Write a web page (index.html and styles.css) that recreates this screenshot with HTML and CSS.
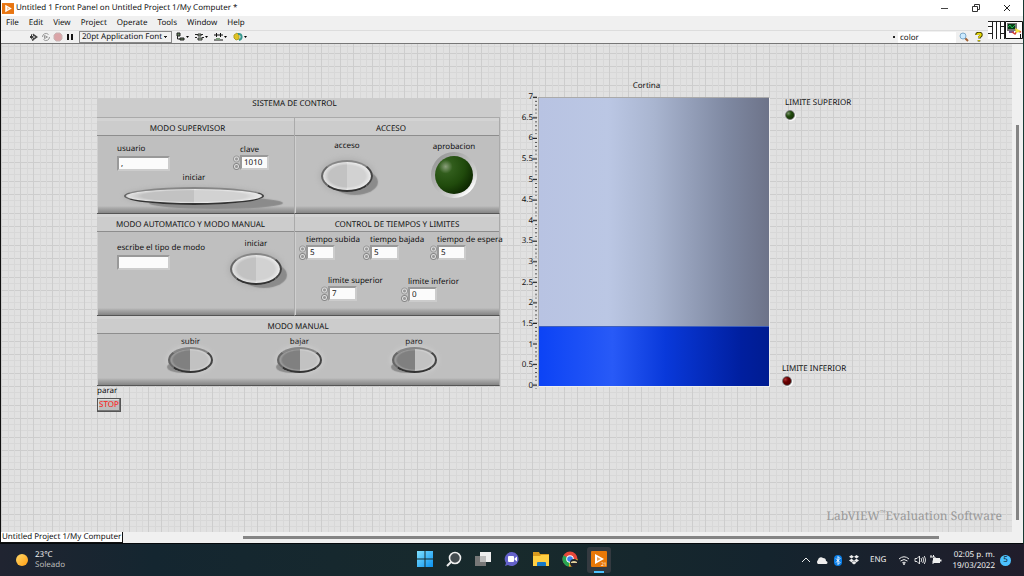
FILE: index.html
```html
<!DOCTYPE html>
<html lang="es">
<head>
  <meta charset="UTF-8">
  <meta name="viewport" content="width=device-width, initial-scale=1">
  <title>Untitled 1 Front Panel</title>
  <link rel="stylesheet" href="styles.css">
</head>
<body>

  <div class="window">
    <header class="titlebar">
      <svg class="app-icon" viewBox="0 0 22 20"><rect width="22" height="20" fill="#e87511"/><path d="M6 3l12 7-12 7z" fill="#fff"/><path d="M9 7l5 3-5 3z" fill="#f5c79e"/></svg>
      <span>Untitled 1 Front Panel on Untitled Project 1/My Computer *</span>
      <div class="win-buttons">
        <button aria-label="Minimize"><svg viewBox="0 0 8 8"><path d="M0 4.500h7" stroke="#444" fill="none"/></svg></button>
        <button aria-label="Restore"><svg viewBox="0 0 8 8"><path d="M.5 2.500h5v5h-5zM2.500 2V.5h5v5H6" stroke="#333" fill="none"/></svg></button>
        <button aria-label="Close"><svg viewBox="0 0 8 8"><path d="M1 1l6 6M7 1L1 7" stroke="#222" fill="none"/></svg></button>
      </div>
    </header>

    <div class="bars">
      <div class="bars-left">
        <nav class="menu">
          <a href="#">File</a><a href="#">Edit</a><a href="#">View</a><a href="#">Project</a><a href="#">Operate</a><a href="#">Tools</a><a href="#">Window</a><a href="#">Help</a>
        </nav>
        <div class="toolbar">
          <button aria-label="Run"><svg viewBox="0 0 10 10"><path d="M1 4h3V1.500L9 5 4 8.500V6H1z" fill="#444"/><path d="M3 2l-1 3 2 4" stroke="#333" fill="none"/><path d="M4 4.500h2v1H4z" fill="#fff"/></svg></button>
          <button aria-label="Run continuously"><svg viewBox="0 0 10 10"><path d="M1.500 5a3.500 3.500 0 0 1 6-2.500M8.500 5a3.500 3.500 0 0 1-6 2.500M3.500 6.500v-3l3 1.500z" stroke="#999" fill="none"/></svg></button>
          <button aria-label="Abort"><svg viewBox="0 0 10 10"><path d="M3 1h4l2 2v4L7 9H3L1 7V3z" fill="#dba5a8" stroke="#c9b6b6"/></svg></button>
          <button aria-label="Pause"><svg viewBox="0 0 10 10"><path d="M2 2h2v6H2zM6 2h2v6H6z" fill="#111"/></svg></button>
          <select class="font-select" aria-label="Font"><option>20pt Application Font</option></select>
          <button class="wide" aria-label="Align"><svg viewBox="0 0 14 10"><path d="M1 1h3v3H1zM4 6h4v2H4z" fill="#67835f" stroke="#222"/><path d="M1.500 4v3H4" stroke="#222" fill="none"/><path d="M10 4h3l-1.500 2z"/></svg></button>
          <button class="wide" aria-label="Distribute"><svg viewBox="0 0 14 10"><path d="M0 2.500h8M0 5.500h2M7 5.500h2" stroke="#222" fill="none"/><path d="M3 2h3v2H3zM3 6h4v2H3z" fill="#a9c0a0" stroke="#333"/><path d="M10 4h3l-1.500 2z"/></svg></button>
          <button class="wide" aria-label="Resize"><svg viewBox="0 0 14 10"><path d="M0 3h9M2.500 1v4M6.500 1v4M0 8h9" stroke="#111" fill="none"/><path d="M2 6h4v2H2z" fill="#7a9978"/><path d="M10 4h3l-1.500 2z"/></svg></button>
          <button class="wide" aria-label="Reorder"><svg viewBox="0 0 14 10"><path d="M1 3l3-2 2 2v4L3 8 1 6z" fill="#e0c321" stroke="#b09e2b"/><path d="M5 2c4-1 5 5 1 6" fill="none" stroke="#38988f" stroke-width="2"/><path d="M11 4h3l-1.500 2z"/></svg></button>
          <div class="search">
            <span class="search-dot"></span>
            <input type="text" value="color" aria-label="Search">
            <button aria-label="Find"><svg viewBox="0 0 10 10"><path d="M6 6l3 3" stroke="#a46335" stroke-width="2"/><circle cx="4" cy="4" r="3" fill="#cbeaff" stroke="#7da9cb"/></svg></button>
          </div>
          <button class="help" aria-label="Context help"><svg viewBox="0 0 8 10"><path d="M1.500 3q0-2 2.500-2t2.500 2q0 1-2 2v1.500M4 8v1.500" stroke="#4b4700" stroke-width="2.600" fill="none"/><path d="M2 3q0-1.500 2-1.500t2 1.500q0 .8-2 2v1M4 8v1" stroke="#eee000" stroke-width="1.400" fill="none"/></svg></button>
        </div>
      </div>
      <svg class="vi-icons" viewBox="0 0 35 18">
        <path d="M0 0h35v18H0z" fill="#fff"/>
        <path d="M0 .5h17M0 5.500h4M0 12.500h4M4.500 1v17M8.500 1v17M12.500 1v17M13 5.500h4M13 12.500h4M16.500 1v17" stroke="#222" fill="none"/>
        <path d="M17.500.5h17v17h-17z" fill="#fff" stroke="#111"/>
        <path d="M19 2h10v8H19z" fill="#777"/><path d="M20 3h7v5h-7z" fill="#063c16"/><path d="M20 6l2-2 2 3 3-3" stroke="#21b84c" fill="none"/>
        <path d="M21 10h5v2h-5z" fill="#7b568f"/><path d="M24 11l3 2 2-3 4 1" stroke="#d43c31" stroke-width="1.500" fill="none"/><path d="M27 7l6 3-5 2z" fill="#f1e436"/><path d="M32.500 13v4" stroke="#111"/>
      </svg>
    </div>

    <main class="workspace">
      <div class="canvas">
        <div class="front">

          <div class="left-side">
            <section class="system">
              <h1>SISTEMA DE CONTROL</h1>
              <div class="panes">
                <section class="pane">
                  <h2 class="supervisor-title">MODO SUPERVISOR</h2>
                  <div class="pane-body supervisor">
                    <div class="supervisor-fields">
                      <div class="field"><label for="usuario">usuario</label><input id="usuario" class="text-box" type="text" value=","></div>
                      <div class="field clave"><label for="clave">clave</label><div class="number"><span class="spin"></span><input id="clave" type="text" value="1010"></div></div>
                    </div>
                    <div class="knob"><label for="iniciar1">iniciar</label><button id="iniciar1" class="oval oval-wide"></button></div>
                  </div>
                </section>
                <section class="pane">
                  <h2 class="acceso-title">ACCESO</h2>
                  <div class="pane-body acceso">
                    <div class="knob"><label for="acceso">acceso</label><button id="acceso" class="oval"></button></div>
                    <div class="knob aprobacion"><span>aprobacion</span><span class="led-bezel"><span class="led led-big"></span></span></div>
                  </div>
                </section>
                <section class="pane pane-tall">
                  <h2 class="auto-title">MODO AUTOMATICO Y MODO MANUAL</h2>
                  <div class="pane-body automatico">
                    <div class="field modo"><label for="modo">escribe el tipo de modo</label><input id="modo" class="text-box" type="text"></div>
                    <div class="knob"><label for="iniciar2">iniciar</label><button id="iniciar2" class="oval"></button></div>
                  </div>
                </section>
                <section class="pane pane-tall">
                  <h2>CONTROL DE TIEMPOS Y LIMITES</h2>
                  <div class="pane-body tiempos">
                    <div class="number-row">
                      <div class="field"><label for="subida">tiempo subida</label><div class="number"><span class="spin"></span><input id="subida" type="text" value="5"></div></div>
                      <div class="field"><label for="bajada">tiempo bajada</label><div class="number"><span class="spin"></span><input id="bajada" type="text" value="5"></div></div>
                      <div class="field"><label for="espera">tiempo de espera</label><div class="number"><span class="spin"></span><input id="espera" type="text" value="5"></div></div>
                    </div>
                    <div class="number-row limits">
                      <div class="field"><label for="lsup">limite superior</label><div class="number"><span class="spin"></span><input id="lsup" type="text" value="7"></div></div>
                      <div class="field limit-low"><label for="linf">limite inferior</label><div class="number"><span class="spin"></span><input id="linf" type="text" value="0"></div></div>
                    </div>
                  </div>
                </section>
                <section class="pane manual-pane">
                  <h2>MODO MANUAL</h2>
                  <div class="pane-body manual">
                    <div class="knob"><label for="subir">subir</label><button id="subir" class="oval oval-off"></button></div>
                    <div class="knob"><label for="bajar">bajar</label><button id="bajar" class="oval oval-off"></button></div>
                    <div class="knob"><label for="paro">paro</label><button id="paro" class="oval oval-off"></button></div>
                  </div>
                </section>
              </div>
            </section>
            <div class="stop-box"><label for="stop">parar</label><button id="stop" class="stop">STOP</button></div>
          </div>

          <div class="cortina">
            <h2>Cortina</h2>
            <div class="tank-row">
              <div class="scale">
                <span>7</span><span>6.5</span><span>6</span><span>5.5</span><span>5</span><span>4.5</span><span>4</span><span>3.5</span><span>3</span><span>2.5</span><span>2</span><span>1.5</span><span>1</span><span>0.5</span><span>0</span>
              </div>
              <svg class="ticks" viewBox="0 0 5 72" preserveAspectRatio="none">
                <defs>
                  <pattern id="tick" width="5" height="5" patternUnits="userSpaceOnUse">
                    <path d="M0 .9h4v.3H0zM2 1.900h2v.2H2zM2 2.900h2v.2H2zM2 3.900h2v.2H2zM2 4.900h2v.1H2z" fill="#222"/>
                  </pattern>
                </defs>
                <rect width="5" height="72" fill="url(#tick)"/>
              </svg>
              <div class="tank"><div class="level"></div></div>
            </div>
          </div>

          <div class="lights">
            <div class="light"><span>LIMITE SUPERIOR</span><span class="led"></span></div>
            <div class="light light-low"><span>LIMITE INFERIOR</span><span class="led led-red"></span></div>
          </div>
        </div>

        <p class="watermark">LabVIEW<sup>™</sup>Evaluation Software</p>
      </div>
      <div class="vscroll"><div class="vthumb"></div></div>
    </main>

    <footer class="statusbar">
      <span class="context">Untitled Project 1/My Computer</span>
      <div class="hscroll"><div class="hthumb"></div></div>
    </footer>
  </div>

  <div class="taskbar">
    <div class="weather">
      <span class="sun"></span>
      <div><div>23°C</div><div class="sky">Soleado</div></div>
    </div>
    <div class="apps">
      <button aria-label="Start"><svg viewBox="0 0 16 16"><defs><linearGradient id="win" x2="1" y2="1"><stop stop-color="#7fe0ff"/><stop offset="1" stop-color="#0a91f0"/></linearGradient></defs><path d="M0 0h7.500v7.500H0zM8.500 0H16v7.500H8.500zM0 8.500h7.500V16H0zM8.500 8.500H16V16H8.500z" fill="url(#win)"/></svg></button>
      <button aria-label="Search"><svg viewBox="0 0 16 16"><circle cx="9" cy="7" r="5.500" fill="#444c50" stroke="#eee" stroke-width="1.600"/><path d="M5 11l-4 4" stroke="#eee" stroke-width="2"/></svg></button>
      <button aria-label="Task view"><svg viewBox="0 0 16 16"><path d="M5 1h11v10H5z" fill="#eee"/><path d="M0 5h11v10H0z" fill="#777"/><path d="M5 5h6v6H5z" fill="#bbb"/></svg></button>
      <button aria-label="Chat"><svg viewBox="0 0 16 16"><path d="M8 1a7 7 0 1 1-4 13l-3 1 1-3A7 7 0 0 1 8 1z" fill="#6462ca"/><rect x="4" y="5" width="6" height="6" rx="1" fill="#fff"/><path d="M10.500 7.500L13 5.500v5l-2.500-2z" fill="#fff"/></svg></button>
      <button aria-label="Explorer"><svg viewBox="0 0 16 16"><path d="M0 1h6l1 2h9v4H0z" fill="#d99a1d"/><path d="M0 5h7l1-1h8v11H0z" fill="#ffcf43"/><path d="M4 15v-3q0-1 1-1h7q1 0 1 1v3z" fill="#1678c7"/></svg></button>
      <button aria-label="Chrome"><svg viewBox="0 0 16 16"><circle cx="8" cy="8" r="7.500" fill="#e7483a"/><path d="M8 8L1.500 4.200A7.500 7.500 0 0 0 7 15.500l3.500-6z" fill="#27a552"/><path d="M8 8h7.500A7.500 7.500 0 0 1 7 15.500z" fill="#f3c822"/><circle cx="8" cy="8" r="3.800" fill="#fff"/><circle cx="8" cy="8" r="2.800" fill="#3e82ed"/><circle cx="12" cy="12" r="4" fill="#20232b"/><path d="M9 11q3-2 6 0v1H9z" fill="#e0d09b"/></svg></button>
      <button class="active" aria-label="LabVIEW"><svg viewBox="0 0 16 16"><rect width="16" height="16" rx="1" fill="#e87807"/><path d="M4 3l9 5-9 5z" fill="#fff"/><path d="M6 6l4 2-4 2z" fill="#e9a25b"/><text x="10" y="15" class="badge-text">21</text></svg></button>
    </div>
    <div class="tray">
      <svg viewBox="0 0 12 12"><path d="M2 8l4-4 4 4" stroke="#eee" fill="none"/></svg>
      <svg viewBox="0 0 12 12"><path d="M2 10a2.500 2.500 0 0 1 0-4 3 3 0 0 1 5-2 3 3 0 0 1 3 3 1.500 1.500 0 0 1 0 3z" fill="#eee"/></svg>
      <svg viewBox="0 0 12 12"><rect x="2" y="1" width="8" height="11" rx="4" fill="#0b7fe8"/><path d="M4 4.500l4 4-2 2v-8l2 2-4 4" stroke="#fff" fill="none" stroke-width=".9"/></svg>
      <svg viewBox="0 0 12 12"><path d="M3.500 1L6 2.800 3.500 4.500 1 2.800zM8.500 1L11 2.800 8.500 4.500 6 2.800zM3.500 4.700L6 6.400 3.500 8.200 1 6.400zM8.500 4.700L11 6.400 8.500 8.200 6 6.400zM6 7l2.500 1.800L6 10.500 3.500 8.800z" fill="#eee"/></svg>
      <span class="lang">ENG</span>
      <svg viewBox="0 0 12 12"><path d="M1 5q5-4.500 10 0M2.500 7q3.500-3 7 0M4.300 8.800q1.700-1.300 3.400 0" stroke="#eee" fill="none"/><circle cx="6" cy="10" r="1" fill="#eee"/></svg>
      <svg viewBox="0 0 12 12"><path d="M1 4.500h2l2.500-2.500v8L3 7.500H1zM7 4q1.500 2 0 4M8.700 3q2.300 3 0 6M10.300 2q3 4 0 8" stroke="#eee" fill="none" stroke-width=".9"/></svg>
      <svg viewBox="0 0 12 12"><path d="M3 4h7v5H3zM10 5.500h1.500v2H10z" fill="#eee"/><path d="M1 1v2M3.500 1v2M0 3h5v2L3 6.500V10" stroke="#eee" fill="none"/></svg>
      <div class="clock"><div>02:05 p. m.</div><div>19/03/2022</div></div>
      <span class="count">5</span>
    </div>
  </div>

</body>
</html>
```

FILE: styles.css
```css
:root {
  --line: #cdcdcd;
  --minor: #d8d8d8;
  --pane: #bfbfbf;
  --pane-title: #cccccc;
}

* {
  box-sizing: border-box;
}

body {
  margin: 0;
  height: 100vh;
  display: flex;
  flex-direction: column;
  overflow: hidden;
  font-family: "Noto Sans", "Open Sans", sans-serif;
  font-size: 8px;
  line-height: 10px;
  text-rendering: geometricPrecision;
  color: #111;
  background: #14202a;
}

button, input, select {
  font: inherit;
  color: inherit;
  text-rendering: inherit;
  margin: 0;
  padding: 0;
  border: none;
  border-radius: 0;
  background: none;
}

h1, h2, p {
  margin: 0;
  font-size: 8px;
  font-weight: normal;
}

svg {
  display: block;
}

.window {
  flex: 1;
  min-height: 0;
  display: flex;
  flex-direction: column;
  border-left: 1px solid #111;
  border-right: 1px solid #173a33;
  border-bottom: 1px solid #05090c;
  background: #f0f0f0;
}

/* title bar */
.titlebar {
  display: flex;
  align-items: center;
  height: 16px;
  padding-left: 1px;
  gap: 2px;
  background: #fff;
}

.app-icon {
  width: 12px;
  height: 11px;
}

.win-buttons {
  display: flex;
  gap: 23px;
  margin-left: auto;
  padding-right: 12px;
}

.win-buttons svg {
  width: 8px;
  height: 8px;
}

/* menu and toolbar */
.bars {
  display: flex;
  height: 28px;
  border-bottom: 1px solid #777;
}

.bars-left {
  flex: 1;
}

.menu {
  display: flex;
  gap: 10px;
  height: 14px;
  padding: 2px 5px;
}

.menu a {
  color: #111;
  text-decoration: none;
}

.toolbar {
  display: flex;
  align-items: center;
  height: 13px;
  padding-left: 28px;
  gap: 2px;
  border-top: 1px solid #ddd;
}

.toolbar button svg {
  width: 10px;
  height: 10px;
}

.toolbar .wide {
  margin-right: 3px;
}

.toolbar .wide svg {
  width: 14px;
}

.font-select {
  width: 93px;
  height: 12px;
  margin: 0 2px;
  padding: 0 2px;
  border: 1px solid #888;
  appearance: none;
  background: linear-gradient(#222, #222) 84px 4px / 3px 1px no-repeat,
    linear-gradient(#222, #222) 85px 5px / 1px 1px no-repeat;
}

.search {
  display: flex;
  align-items: center;
  gap: 3px;
  margin-left: auto;
}

.search-dot {
  width: 2px;
  height: 2px;
  background: #222;
}

.search input {
  width: 58px;
  height: 11px;
  padding-left: 2px;
  background: #fff;
}

.toolbar .help {
  margin: 0 5px 0 4px;
}

.toolbar .help svg {
  width: 8px;
}

.vi-icons {
  width: 35px;
  height: 18px;
  margin-top: 5px;
}

/* grid background */
.workspace {
  flex: 1;
  min-height: 0;
  display: flex;
}

.canvas {
  flex: 1;
  display: flex;
  flex-direction: column;
  justify-content: space-between;
  background-color: #e1e1e1;
  background-image:
    linear-gradient(90deg, var(--line) 1px, transparent 1px 7px, var(--minor) 7px 8px, transparent 8px 13px, var(--minor) 13px 14px, transparent 14px 19px, var(--line) 19px 20px, transparent 20px 26px, var(--minor) 26px 27px, transparent 27px),
    linear-gradient(var(--line) 1px, transparent 1px 6px, var(--minor) 6px 7px, transparent 7px 13px, var(--line) 13px 14px, transparent 14px 19px, var(--minor) 19px 20px, transparent 20px 25px, var(--minor) 25px 26px, transparent 26px);
  background-size: 32px 32px;
  background-position: 0 9px;
}

.vscroll {
  width: 11px;
  padding: 81px 2px 12px 4px;
  background: #f0f0f0;
}

.vthumb {
  width: 3px;
  height: 100%;
  background: #858585;
}

.front {
  display: flex;
  align-items: flex-start;
  padding: 37px 0 0 96px;
}

/* system panel */
.left-side {
  width: 403px;
  margin-top: 17px;
}

.system {
  background: var(--pane);
}

.system h1 {
  height: 20px;
  padding: 1px 8px 0 0;
  text-align: center;
  background: var(--pane-title);
  border-bottom: 1px solid #aaa;
}

.panes {
  display: grid;
  grid-template-columns: 198px 1fr;
}

.pane {
  min-width: 0;
  border-right: 1px solid #aaa;
  border-bottom: 1px solid #555;
  background: var(--pane);
}

.pane h2 {
  height: 18px;
  padding-top: 3px;
  text-align: center;
  line-height: 10px;
  border-top: 3px solid #d3d3d3;
  border-bottom: 1px solid #8d8d8d;
  background: var(--pane-title);
}

.pane .supervisor-title {
  padding-right: 16px;
}

.pane .acceso-title {
  padding-right: 12px;
}

.pane .auto-title {
  padding-right: 10px;
}

.pane-body {
  height: 77px;
  border-left: 1px solid #cfcfcf;
  background: linear-gradient(transparent calc(100% - 7px), #aaa calc(100% - 5px), #858585);
}

.pane-tall .pane-body {
  height: 83px;
}

.field, .knob {
  display: flex;
  flex-direction: column;
}

.field {
  white-space: nowrap;
  gap: 2px;
}

.knob {
  align-items: center;
  gap: 4px;
}

.field input {
  height: 15px;
  padding: 0 2px;
  border: 2px solid;
  border-color: #999 #ccc #ccc #999;
  background: #fbfbfb;
}

.field .text-box {
  width: 53px;
}

.number {
  display: flex;
  margin-left: -6px;
}

.number input {
  width: 29px;
}

.spin {
  width: 7px;
  height: 15px;
  margin-left: -1px;
  background:
    radial-gradient(circle, #999 1px, #ddd 2px, #999 3px, transparent 4px) 0 0 / 7px 8px no-repeat,
    radial-gradient(circle, #999 1px, #ddd 2px, #888 3px, transparent 4px) 0 8px / 7px 7px no-repeat;
}

.supervisor {
  padding-top: 8px;
}

.supervisor-fields {
  display: flex;
  justify-content: space-between;
  padding: 0 25px 0 19px;
}

.field.clave {
  padding-top: 1px;
  gap: 0;
}

.supervisor .knob {
  margin-top: 2px;
  padding-right: 4px;
}

.oval {
  width: 52px;
  height: 32px;
  border: 2px solid;
  border-color: #868686 #444 #333 #666;
  border-radius: 50%;
  background: radial-gradient(ellipse, transparent 54%, rgba(255, 255, 255, 0.5) 68%, transparent 74%),
    linear-gradient(90deg, #c2c2c2 50%, #d2d2d2 50%);
  box-shadow: 8px 6px 1px -3px #8b8b8b, 0 0 5px 2px #b1b1b1;
}

.oval-wide {
  width: 140px;
  height: 18px;
  box-shadow: 22px 7px 1px -3px #8b8b8b, 0 0 4px 1px #b1b1b1;
}

.oval-off {
  width: 45px;
  height: 26px;
  background: radial-gradient(ellipse, transparent 58%, rgba(255, 255, 255, 0.2) 66%, transparent 72%),
    linear-gradient(90deg, #808080 50%, #c2c2c2 50%);
  box-shadow: -8px 7px 1px -7px #8b8b8b, 0 0 4px 2px #cacaca;
}

.acceso {
  display: flex;
  justify-content: space-between;
  padding: 5px 22px 0 25px;
}

.acceso .knob {
  gap: 9px;
}

.acceso .aprobacion {
  gap: 0;
  padding-top: 1px;
}

.led {
  width: 10px;
  height: 10px;
  border: 1px solid #777;
  border-radius: 50%;
  background: radial-gradient(circle at 30% 30%, #77906a, #234b0f 35%, #0d2500);
  box-shadow: 1px 1px 1px #fff;
}

.led-red {
  background: radial-gradient(circle at 30% 30%, #a33, #690000 35%, #420000);
}

.led-bezel {
  padding: 4px;
  border-radius: 50%;
  background: linear-gradient(135deg, #9c9c9c 15%, #bcbcbc 50%, #d0d0d0 70%, #fff 85%);
}

.led-big {
  display: block;
  width: 38px;
  height: 38px;
  border: none;
  background: radial-gradient(circle at 28% 28%, #8ba07c, #315d1c 18%, #204a0c 50%, #0c2500 80%);
  box-shadow: none;
}

.automatico {
  display: flex;
  justify-content: space-between;
  padding: 7px 12px 0 19px;
}

.automatico .modo {
  padding-top: 4px;
}

.tiempos {
  padding: 3px 0 0 10px;
}

.number-row {
  display: grid;
  grid-template-columns: 64px 67px 62px;
}

.number-row .field {
  gap: 0;
}

.limits {
  grid-template-columns: 80px 80px;
  padding: 16px 0 0 22px;
}

.limit-low {
  padding-top: 1px;
}

.manual-pane {
  grid-column: 1 / -1;
}

.pane-body.manual {
  height: 51px;
  display: grid;
  grid-template-columns: 109px 109px 120px;
  padding: 3px 0 0 38px;
}

.manual .knob {
  gap: 0;
}

.stop-box {
  display: flex;
  flex-direction: column;
  align-items: flex-start;
  gap: 2px;
}

.stop {
  width: 24px;
  height: 14px;
  border: 1px solid #555;
  color: #f11;
  line-height: 12px;
  background: #bdbdbd;
  box-shadow: inset -1px -1px #777, inset 1px 1px #ddd;
}

/* tank */
.cortina {
  width: 247px;
  margin-left: 23px;
}

.cortina h2 {
  text-align: center;
}

.tank-row {
  display: flex;
  margin-top: 1px;
}

.scale {
  width: 10px;
  height: 299px;
  display: flex;
  flex-direction: column;
  justify-content: space-between;
  align-items: flex-end;
}

.ticks {
  width: 5px;
  height: 296px;
  margin-top: 1px;
}

.tank {
  flex: 1;
  display: flex;
  align-items: flex-end;
  height: 290px;
  margin-top: 5px;
  border: 1px solid #aaa;
  border-color: #aaa #eee #eee #aaa;
  background: linear-gradient(90deg, #b8c3e2, #bbc7e4 30%, #a9b5d0 50%, #7e88a1 82%, #6d7389);
}

.level {
  width: 100%;
  height: 60px;
  border-top: 1px solid #3e5fbc;
  background: linear-gradient(90deg, #0c43f5, #285af7 32%, #0939da 55%, #001f9f 88%, #001c91);
}

.lights {
  display: flex;
  flex-direction: column;
  gap: 244px;
  padding: 17px 0 0 12px;
}

.light {
  display: flex;
  flex-direction: column;
  gap: 2px;
  padding-left: 3px;
}

.light-low {
  padding-left: 0;
}

.watermark {
  align-self: flex-end;
  padding: 0 10px 8px 0;
  font-family: "Noto Serif", "DejaVu Serif", serif;
  font-size: 12px;
  line-height: 16px;
  color: #999;
}

.watermark sup {
  font-size: 7px;
  line-height: 7px;
}

/* bottom of the window */
.statusbar {
  display: flex;
  height: 11px;
}

.context {
  padding: 0 1px;
  border: solid #111;
  border-width: 0 1px 1px 0;
  background: #fff;
}

.hscroll {
  flex: 1;
  padding: 4px 84px 4px 120px;
}

.hthumb {
  height: 3px;
  background: #858585;
}

/* taskbar */
.taskbar {
  display: grid;
  grid-template-columns: 1fr auto 1fr;
  align-items: center;
  height: 32px;
  color: #f2f2f2;
  background: linear-gradient(90deg, #202431, #142630 15%, #182a2c 50%, #14242e 75%, #211d2b);
}

.weather {
  display: flex;
  align-items: center;
  gap: 7px;
  padding-left: 16px;
}

.sun {
  width: 12px;
  height: 12px;
  border-radius: 50%;
  background: linear-gradient(135deg, #ffd96a, #ff9d12);
}

.sky {
  color: #bbb;
}

.apps {
  display: flex;
  gap: 5px;
}

.apps button {
  padding: 4px;
  border-bottom: 2px solid transparent;
}

.apps svg {
  width: 16px;
  height: 16px;
}

.apps .active {
  border-radius: 3px;
  background: linear-gradient(#4cc2ff, #4cc2ff) center bottom / 10px 2px no-repeat border-box #343a40;
}

.badge-text {
  font-size: 5px;
  fill: #fff;
}

.tray {
  display: flex;
  align-items: center;
  justify-content: flex-end;
  gap: 4px;
  padding-right: 13px;
}

.tray svg {
  width: 12px;
  height: 12px;
}

.lang {
  margin: 0 8px 0 6px;
}

.clock {
  margin-left: 6px;
  text-align: right;
  line-height: 11px;
}

.count {
  width: 11px;
  height: 11px;
  margin-left: 1px;
  border-radius: 50%;
  text-align: center;
  color: #123;
  background: #4cc2ff;
}
```
